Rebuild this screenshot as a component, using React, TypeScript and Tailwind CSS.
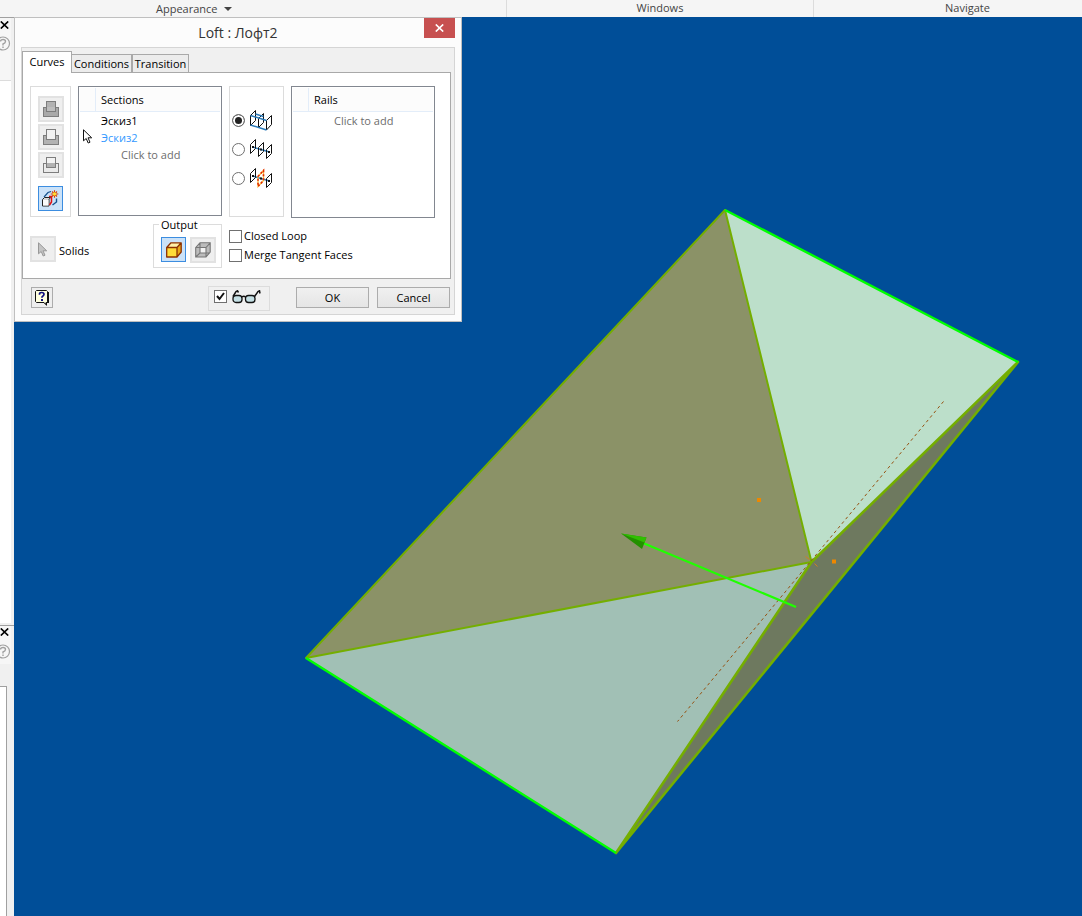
import React, { useState } from "react";

type IconProps = { className?: string };

const JoinIcon: React.FC<{ top: string; overlap: string; base: string }> = ({ top, overlap, base }) => (
    <svg width="16" height="16" viewBox="0 0 16 16" shapeRendering="crispEdges" aria-hidden="true">
        <rect x="3" y="0" width="10" height="7" fill={top} />
        <rect x="0" y="6" width="16" height="10" fill={base} />
        <rect x="3" y="6" width="10" height="5" fill={overlap} />
        <path d="M3.5 6V.5h9V6M3.5 6v4.5h9V6M3 6.5H.5v9h15v-9H13" fill="none" stroke="#7d7d7d" />
    </svg>
);

const SurfaceIcon: React.FC = () => (
    <svg width="17" height="17" viewBox="0 0 17 17" aria-hidden="true">
        <path d="M2 7 6 2.500 9 1.500" fill="none" stroke="#14508c" strokeWidth="1.200" />
        <path d="M14.500 8.500v3.500l-4 3" fill="none" stroke="#14508c" strokeWidth="1.400" />
        <path d="M.5 9.500 2.500 7.500h6l-1.500 2v6.500H.5z" fill="#d8d8d8" stroke="#222" />
        <path d="M1 10h5.500v5.500H1z" fill="#fafafa" />
        <path d="M7 6.500h2.500v5.500L7.500 15" fill="none" stroke="#e01010" strokeWidth="1.500" />
        <path d="M12.500.2v7.600M8.700 4h7.600M10 1.500l5 5M15 1.500l-5 5" stroke="#d84000" strokeWidth="1.100" />
        <circle cx="12.500" cy="4" r="1.700" fill="#ffe030" />
    </svg>
);

const RailsIcon: React.FC = () => (
    <svg width="23" height="21" viewBox="0 0 23 21" aria-hidden="true">
        <g fill="none" stroke="#111">
            <path d="M.5 5.500 5.500.5v10l-5 5z" />
            <path d="M8.500 8.500l5-5v9l-5 5z" />
            <path d="M16.500 10.500l5-5v9l-5 5.500z" />
        </g>
        <path d="M.5 5.500l16 5M.5 15l16 5M5.500 4l8 2.500" fill="none" stroke="#2878b8" strokeWidth="1.400" />
    </svg>
);

const CenterlineIcon: React.FC = () => (
    <svg width="23" height="21" viewBox="0 0 23 21" aria-hidden="true">
        <path d="M2.500 8l17 5" fill="none" stroke="#2878b8" strokeWidth="1.500" />
        <g fill="none" stroke="#111">
            <path d="M.5 5.500 5.500.5v9l-5 5z" />
            <path d="M8.500 8.500l5-5v9l-5 5z" />
            <path d="M16.500 10.500l5-5v9l-5 5z" />
        </g>
        <path d="M2 7h2v2H2zM10 9.500h2v2h-2zM18 12h2v2h-2z" fill="#111" />
    </svg>
);

const AreaIcon: React.FC = () => (
    <svg width="23" height="21" viewBox="0 0 23 21" aria-hidden="true">
        <path d="M2.500 8l17 5" fill="none" stroke="#2878b8" strokeWidth="1.500" />
        <g fill="none" stroke="#111">
            <path d="M.5 5.500 5.500.5v9l-5 5z" />
            <path d="M16.500 10.500l5-5v9l-5 5z" />
        </g>
        <path d="M8 8.500l5.500-6v10l-5.500 6z" fill="none" stroke="#ffc040" strokeWidth="1.300" />
        <path d="M8 8.500l5.500-6v10l-5.500 6z" fill="none" stroke="#e02800" strokeWidth="1.600" strokeDasharray="2 2" />
        <path d="M2 7h2v2H2zM10 9.500h2v2h-2zM18 12h2v2h-2z" fill="#111" />
    </svg>
);

const SolidCube: React.FC = () => (
    <svg width="16" height="16" viewBox="0 0 16 16" aria-hidden="true">
        <path d="M.7 5.500 5 .8h10.200L11 5.500z" fill="#fff0a8" />
        <path d="M11 5.500 15.200.8V10L11 15z" fill="#e8a818" />
        <path d="M.7 5.500H11V15H.7z" fill="#ffdc38" />
        <path d="M.7 5.500 5 .8h10.200V10L11 15H.7zM.7 5.500H11V15M11 5.500 15.200.8" fill="none" stroke="#8c3000" strokeWidth="1.300" strokeLinejoin="round" />
    </svg>
);

const HollowCube: React.FC = () => (
    <svg width="16" height="16" viewBox="0 0 16 16" className="shrink-0" aria-hidden="true">
        <path d="M.7 5.500 5 .8h10.200V10L11 15H.7z" fill="#bcbcbc" />
        <path d="M5 5.500h6v5.500H5z" fill="#f2f2f2" />
        <path d="M.7 5.500 5 .8h10.200V10L11 15H.7zM.7 5.500H11V15M11 5.500 15.200.8M5 .8V11L.7 15M5 11h10" fill="none" stroke="#777" strokeWidth="1.100" />
    </svg>
);

const PointerIcon: React.FC<IconProps & { fill: string; stroke: string }> = ({ className, fill, stroke }) => (
    <svg className={className} width="10" height="15" viewBox="0 0 10 15" aria-hidden="true">
        <path d="M.5.8v11l2.700-2.300 2 4.500 1.800-.8-2-4.400h3.700z" fill={fill} stroke={stroke} />
    </svg>
);

const HelpIcon: React.FC = () => (
    <svg width="15" height="16" viewBox="0 0 15 16" aria-hidden="true">
        <path d="M3 2h11v11h-2v3l-3-3H3z" fill="#111" />
        <path d="M1.500.5h10l1 1v10l-1 1H11v2l-2-2H1.500l-1-1v-10z" fill="#ffffe0" stroke="#111" />
        <path d="M4.500 4.700V4q0-1.500 2.200-1.500Q9 2.500 9 4.200q0 1-1.100 1.800-1 .6-1 1.800" fill="none" stroke="#101080" strokeWidth="1.700" />
        <path d="M6 9h2v2H6z" fill="#101080" />
    </svg>
);

const GlassesIcon: React.FC = () => (
    <svg width="29" height="14" viewBox="0 0 29 14" fill="none" stroke="#111" aria-hidden="true">
        <rect x="1" y="5.500" width="9" height="7" rx="3" fill="#c4dfe4" strokeWidth="1.300" />
        <rect x="13.500" y="5.500" width="9.500" height="7" rx="3" fill="#c4dfe4" strokeWidth="1.300" />
        <path d="M10 7q1.700-1.500 3.500 0M1 6.500 4 1.500l1.500-.7 1 1.700M22.500 6.500 26 1.500 27.500.8 28 3.500" strokeWidth="1.500" />
    </svg>
);

const CloseGlyph: React.FC<IconProps> = ({ className }) => (
    <svg className={className} width="9" height="8" viewBox="0 0 9 8" stroke="currentColor" strokeWidth="1.700" aria-hidden="true">
        <path d="M.8.500l7.400 7M8.200.500l-7.400 7" />
    </svg>
);

const iconButton = "flex size-[26px] items-center justify-center border-2 border-[#e2e2e2] bg-[#efefef]";
const activeButton = "flex size-[25px] items-center justify-center border border-[#3c8de0] bg-[#cbe2f8]";
const pushButton = "h-[21px] w-[73px] border border-[#acacac] bg-linear-to-b from-[#f0f0f0] to-[#e5e5e5]";

const Check: React.FC<{ id: string; label?: string; defaultChecked?: boolean }> = ({ id, label, defaultChecked }) => (
    <span className="grid size-[13px] shrink-0 place-items-center">
        <input
            id={id}
            type="checkbox"
            aria-label={label}
            defaultChecked={defaultChecked}
            className="peer col-start-1 row-start-1 size-[13px] appearance-none border border-[#707070] bg-white"
        />
        <svg className="pointer-events-none col-start-1 row-start-1 hidden peer-checked:block" width="9" height="9" viewBox="0 0 9 9" aria-hidden="true">
            <path d="M1 4l2.500 3L8 1" fill="none" stroke="#111" strokeWidth="2" />
        </svg>
    </span>
);

const ListBox: React.FC<{ title: string; height: string; children: React.ReactNode }> = ({ title, height, children }) => (
    <div className={`relative w-36 border border-[#828790] bg-white p-px ${height}`}>
        <div className="flex h-6 items-center border-b border-[#e3edf9] bg-[#fcfcfc]">
            <span className="h-full w-4 border-r border-[#e3edf9]" />
            <span className="pl-[5px]">{title}</span>
        </div>
        <ul className="leading-[17px]">{children}</ul>
    </div>
);

const PathOptions: React.FC = () => {
    const [path, setPath] = useState("rails");
    const options = [
        { id: "rails", label: "Rails", icon: <RailsIcon /> },
        { id: "centerline", label: "Center Line", icon: <CenterlineIcon /> },
        { id: "area", label: "Area Loft", icon: <AreaIcon /> },
    ];

    return (
        <div className="flex h-[131px] w-[55px] flex-col gap-2 border border-[#dcdcdc] pt-[23px] pl-0.5">
            {options.map((option) => (
                <label key={option.id} className="flex h-[21px] items-center gap-[5px]">
                    <input
                        type="radio"
                        name="path"
                        aria-label={option.label}
                        checked={path === option.id}
                        onChange={() => setPath(option.id)}
                        className="size-[13px] shrink-0 appearance-none rounded-full border border-[#707070] bg-white checked:bg-[#222] checked:shadow-[inset_0_0_0_2px_white]"
                    />
                    {option.icon}
                </label>
            ))}
        </div>
    );
};

const CurvesTab: React.FC = () => (
    <div className="border border-[#a9a9a9] bg-white px-[7px] pt-[13px] pb-2.5">
        <div className="flex items-start gap-[7px]">
            <div className="flex h-[131px] w-[41px] flex-col items-center gap-0.5 border border-[#dcdcdc] pt-[9px]">
                <button aria-label="Join" className={iconButton}>
                    <JoinIcon top="#b2b2b2" overlap="#bdbdbd" base="#a9a9a9" />
                </button>
                <button aria-label="Cut" className={iconButton}>
                    <JoinIcon top="#f2f2f2" overlap="#f2f2f2" base="#b2b2b2" />
                </button>
                <button aria-label="Intersect" className={iconButton}>
                    <JoinIcon top="#f2f2f2" overlap="#b2b2b2" base="#eaeaea" />
                </button>
                <button aria-label="New solid" className={`${activeButton} mt-1.5`}>
                    <SurfaceIcon />
                </button>
            </div>
            <ListBox title="Sections" height="h-[130px]">
                <li className="pl-[21px]">Эскиз1</li>
                <li className="pl-[21px] text-[#3399ff]">Эскиз2</li>
                <li className="pl-[41px] text-[#6d6d6d]">Click to add</li>
                <PointerIcon className="absolute top-[42px] left-1" fill="#fff" stroke="#111" />
            </ListBox>
            <PathOptions />
            <ListBox title="Rails" height="h-[132px]">
                <li className="pl-[41px] text-[#6d6d6d]">Click to add</li>
            </ListBox>
        </div>
        <div className="mt-1.5 flex h-11 items-start">
            <div className="flex w-[123px] items-center gap-[3px] pt-3">
                <button id="solids" className={iconButton}>
                    <PointerIcon fill="#c4c4c4" stroke="#999" />
                </button>
                <label htmlFor="solids" className="pt-1">Solids</label>
            </div>
            <div role="group" aria-labelledby="output" className="relative flex h-11 w-[69px] gap-1 border border-[#dcdcdc] pt-3 pl-[7px]">
                <span id="output" className="absolute -top-2 left-[5px] bg-white px-0.5 leading-4">Output</span>
                <button aria-label="Solid" className={activeButton}>
                    <SolidCube />
                </button>
                <button aria-label="Surface" className={iconButton}>
                    <HollowCube />
                </button>
            </div>
            <div className="ml-[7px] flex flex-col gap-[3px] pt-1">
                <div className="flex h-4 items-center gap-0.5">
                    <Check id="closed" />
                    <label htmlFor="closed">Closed Loop</label>
                </div>
                <div className="flex h-4 items-center gap-0.5">
                    <Check id="merge" />
                    <label htmlFor="merge">Merge Tangent Faces</label>
                </div>
            </div>
        </div>
    </div>
);

const LoftDialog: React.FC = () => (
    <section
        aria-label="Loft"
        className="absolute top-0 left-0 w-[448px] border border-[#bfbfbf] bg-[#fcfcfc] px-1.5 pb-1.5 font-['Open_Sans','Noto_Sans',sans-serif] text-[11px] leading-4 text-black"
    >
        <header className="relative flex h-[29px] items-center justify-center">
            <h1 className="text-[14px] text-[#333]">Loft : Лофт2</h1>
            <button aria-label="Close" className="absolute top-0 right-0 flex h-5 w-[31px] items-center justify-center bg-[#c75050] text-white">
                <CloseGlyph />
            </button>
        </header>
        <div className="border border-[#d5d5d5] bg-[#f0f0f0] pt-[3px]">
            <div role="tablist" className="flex items-end">
                <button role="tab" aria-selected="true" className="relative -mb-px h-[22px] w-[50px] border border-b-0 border-[#a9a9a9] bg-white pb-0.5">
                    Curves
                </button>
                <button role="tab" aria-selected="false" className="h-[18px] w-[60px] border border-b-0 border-l-0 border-[#a9a9a9] bg-[#ececec]">
                    Conditions
                </button>
                <button role="tab" aria-selected="false" className="h-[18px] w-[57px] border border-b-0 border-[#a9a9a9] bg-[#ececec]">
                    Transition
                </button>
            </div>
            <div className="pr-[3px]">
                <CurvesTab />
            </div>
            <footer className="flex items-start pt-2 pr-1 pb-[3px] pl-[9px]">
                <button aria-label="Help" className="flex h-[21px] w-[22px] items-center justify-center border border-[#acacac] bg-[#eeeeee]">
                    <HelpIcon />
                </button>
                <div className="-mt-px ml-auto flex h-[25px] w-[62px] items-start gap-[5px] border border-[#dcdcdc] pt-[3px] pl-[5px]">
                    <Check id="preview" label="Preview" defaultChecked />
                    <GlassesIcon />
                </div>
                <button className={`${pushButton} ml-[26px]`}>OK</button>
                <button className={`${pushButton} ml-2`}>Cancel</button>
            </footer>
        </div>
    </section>
);

const Model: React.FC = () => (
    <svg className="absolute inset-0 size-full" viewBox="14 17 1068 899" role="img" aria-label="Loft preview">
        <path d="M725 210 811 562 306 658z" fill="#8b9267" />
        <path d="M725 210 1018 362 811 562z" fill="#bcdfca" />
        <path d="M306 658 811 562 616 853z" fill="#a1c0b5" />
        <path d="M811 562 1018 362 616 853z" fill="#6e795f" />
        <path d="M725 210 811.500 562 306 658z" fill="none" stroke="#74ae00" strokeWidth="2" strokeLinejoin="round" />
        <path d="M811.500 562 1018 362 616 853z" fill="none" stroke="#74ae00" strokeWidth="2.600" strokeLinejoin="round" />
        <path d="M725 210l293 152M306 658l310 195" stroke="#00ff00" strokeWidth="2.400" />
        <path d="M943.500 401.500 677.500 721.500" stroke="#96500f" strokeDasharray="3 3" />
        <path d="M805.500 556.500l4 3M814.500 563.500l3 3" stroke="#d08020" />
        <path d="M757 498h4v4h-4zM832 559.500h4v4h-4z" fill="#ee8800" />
        <path d="M796 607 643 543" stroke="#20ff00" strokeWidth="2.200" />
        <path d="M621 533.500l25.500 4-4.500 11.500z" fill="#249000" />
        <path d="M621 533.500l25.500 4-2 5z" fill="#30c000" />
    </svg>
);

const PanelHeader: React.FC = () => (
    <>
        <button aria-label="Close panel" className="flex h-[13px] w-[9px] items-center">
            <CloseGlyph />
        </button>
        <button aria-label="Panel help" className="mt-[5px] block">
            <svg width="11" height="15" viewBox="0 0 11 15" fill="none" stroke="#a0a0a0" aria-hidden="true">
                <circle cx="3" cy="7.500" r="6.500" strokeWidth="1.200" />
                <path d="M.5 5.500Q.5 3.500 3 3.500t2.500 2Q5.500 7 3 8v1.500M3 10.500V12" strokeWidth="1.400" />
            </svg>
        </button>
    </>
);

const App: React.FC = () => {
    return (
        <div className="flex h-screen flex-col overflow-hidden bg-[#004e98]">
            <nav className="flex h-[17px] shrink-0 bg-[#f5f5f5] font-['Open_Sans','Noto_Sans',sans-serif] text-[11px] leading-4 text-[#444]">
                <button className="flex w-[507px] shrink-0 items-center gap-1.5 border-r border-[#dcdcdc] pl-[156px]">
                    Appearance
                    <svg width="8" height="4" viewBox="0 0 8 4" aria-hidden="true">
                        <path d="M0 0h8L4 4z" fill="#444" />
                    </svg>
                </button>
                <div className="w-[307px] shrink-0 border-r border-[#dcdcdc] text-center">Windows</div>
                <div className="w-[307px] shrink-0 text-center">Navigate</div>
            </nav>
            <div className="flex min-h-0 flex-1">
                <aside className="flex w-3.5 shrink-0 flex-col overflow-hidden bg-[#f0f0f0]">
                    <div className="flex flex-[608] flex-col border-t border-[#a0a0a0] pr-[3px]">
                        <div className="h-[63px] border-b border-[#dcdcdc] bg-[#f6f6f6]">
                            <PanelHeader />
                        </div>
                        <div className="mb-0.5 flex-1 bg-white" />
                    </div>
                    <div className="flex flex-[291] flex-col border-t border-[#a0a0a0]">
                        <div className="mr-[3px] h-[38px] bg-[#f6f6f6]">
                            <PanelHeader />
                        </div>
                        <div className="mt-[22px] w-[7px] flex-1 border-t border-r border-[#a0a0a0] bg-white" />
                    </div>
                </aside>
                <main className="relative min-w-0 flex-1">
                    <Model />
                    <LoftDialog />
                </main>
            </div>
        </div>
    );
};

export default App;
